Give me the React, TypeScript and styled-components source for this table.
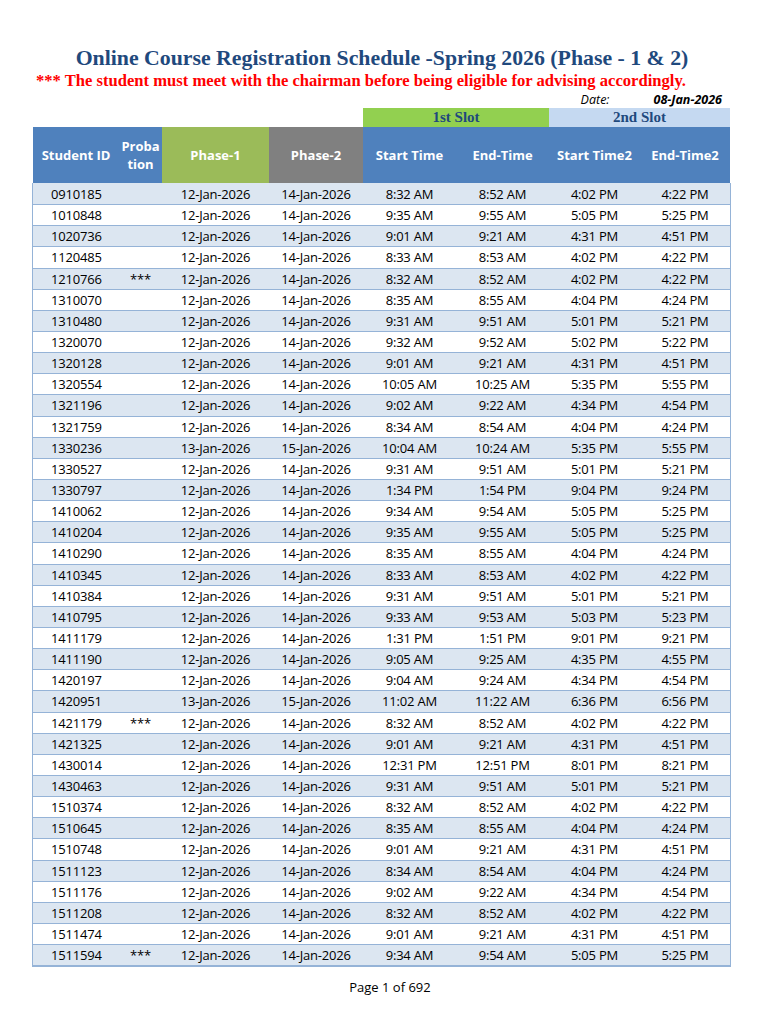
import React from "react";
import styled, { createGlobalStyle } from "styled-components";

const GlobalStyle = createGlobalStyle`
  html, body { margin: 0; padding: 0; background: #ffffff; }
  body { font-family: "Open Sans", "Liberation Sans", sans-serif; }
`;

const COLS = "86px 43px 107px 94px 93px 93px 91px 90px";

const Page = styled.div`
  width: 768px;
  height: 1024px;
  box-sizing: border-box;
  padding: 45px 0 0 0;
  display: flex;
  flex-direction: column;
`;

const Title = styled.h1`
  margin: 0;
  font-family: "Liberation Serif", "DejaVu Serif", serif;
  font-weight: bold;
  font-size: 21.8px;
  line-height: 26px;
  color: #1f497d;
  text-align: center;
  padding-right: 4px;
`;

const Note = styled.div`
  margin: 0 0 0 36px;
  font-family: "Liberation Serif", "DejaVu Serif", serif;
  font-weight: bold;
  font-size: 16.6px;
  line-height: 20px;
  color: #ff0000;
  white-space: nowrap;
`;

const DateLine = styled.div`
  display: flex;
  justify-content: flex-end;
  padding-right: 46px;
  gap: 44px;
  font-family: "Open Sans", sans-serif;
  font-style: italic;
  font-size: 12.5px;
  line-height: 17px;
  color: #000;
`;

const DateValue = styled.span`
  font-weight: bold;
`;

const Table = styled.div`
  margin-left: 33px;
  width: 697px;
  display: flex;
  flex-direction: column;
`;

const SlotRow = styled.div`
  display: grid;
  grid-template-columns: ${COLS};
  height: 19px;
`;

const SlotCell = styled.div<{ $bg: string; $span: number }>`
  grid-column: span ${(p) => p.$span};
  background: ${(p) => p.$bg};
  color: #1f497d;
  font-family: "Liberation Serif", "DejaVu Serif", serif;
  font-weight: bold;
  font-size: 15px;
  display: flex;
  align-items: center;
  justify-content: center;
`;

const HeadRow = styled.div`
  display: grid;
  grid-template-columns: ${COLS};
  height: 56px;
`;

const HeadCell = styled.div<{ $bg: string }>`
  background: ${(p) => p.$bg};
  color: #ffffff;
  font-weight: bold;
  font-size: 13px;
  line-height: 18px;
  display: flex;
  align-items: center;
  justify-content: center;
  text-align: center;
`;

const Body = styled.div`
  border-left: 1px solid #95b3d7;
  border-right: 1px solid #95b3d7;
  border-bottom: 2px solid #95b3d7;
  margin-left: -1px;
  margin-right: -1px;
`;

const Row = styled.div<{ $striped: boolean }>`
  display: grid;
  grid-template-columns: ${COLS};
  height: 21.15px;
  box-sizing: border-box;
  background: ${(p) => (p.$striped ? "#dce6f1" : "#ffffff")};
  border-top: 1px solid #95b3d7;
  font-size: 13px;
  color: #000;
  &:first-child { border-top: none; }
`;

const Cell = styled.div<{ $left?: boolean }>`
  display: flex;
  align-items: center;
  justify-content: ${(p) => (p.$left ? "flex-start" : "center")};
  padding-left: ${(p) => (p.$left ? "18px" : "0")};
  white-space: nowrap;
  letter-spacing: -0.2px;
`;

const Footer = styled.div`
  margin-top: 11px;
  text-align: center;
  padding-left: 12px;
  font-size: 13px;
  color: #000;
`;

type R = [string, string, string, string, string, string, string, string];

const rows: R[] = [
  ["0910185", "", "12-Jan-2026", "14-Jan-2026", "8:32 AM", "8:52 AM", "4:02 PM", "4:22 PM"],
  ["1010848", "", "12-Jan-2026", "14-Jan-2026", "9:35 AM", "9:55 AM", "5:05 PM", "5:25 PM"],
  ["1020736", "", "12-Jan-2026", "14-Jan-2026", "9:01 AM", "9:21 AM", "4:31 PM", "4:51 PM"],
  ["1120485", "", "12-Jan-2026", "14-Jan-2026", "8:33 AM", "8:53 AM", "4:02 PM", "4:22 PM"],
  ["1210766", "***", "12-Jan-2026", "14-Jan-2026", "8:32 AM", "8:52 AM", "4:02 PM", "4:22 PM"],
  ["1310070", "", "12-Jan-2026", "14-Jan-2026", "8:35 AM", "8:55 AM", "4:04 PM", "4:24 PM"],
  ["1310480", "", "12-Jan-2026", "14-Jan-2026", "9:31 AM", "9:51 AM", "5:01 PM", "5:21 PM"],
  ["1320070", "", "12-Jan-2026", "14-Jan-2026", "9:32 AM", "9:52 AM", "5:02 PM", "5:22 PM"],
  ["1320128", "", "12-Jan-2026", "14-Jan-2026", "9:01 AM", "9:21 AM", "4:31 PM", "4:51 PM"],
  ["1320554", "", "12-Jan-2026", "14-Jan-2026", "10:05 AM", "10:25 AM", "5:35 PM", "5:55 PM"],
  ["1321196", "", "12-Jan-2026", "14-Jan-2026", "9:02 AM", "9:22 AM", "4:34 PM", "4:54 PM"],
  ["1321759", "", "12-Jan-2026", "14-Jan-2026", "8:34 AM", "8:54 AM", "4:04 PM", "4:24 PM"],
  ["1330236", "", "13-Jan-2026", "15-Jan-2026", "10:04 AM", "10:24 AM", "5:35 PM", "5:55 PM"],
  ["1330527", "", "12-Jan-2026", "14-Jan-2026", "9:31 AM", "9:51 AM", "5:01 PM", "5:21 PM"],
  ["1330797", "", "12-Jan-2026", "14-Jan-2026", "1:34 PM", "1:54 PM", "9:04 PM", "9:24 PM"],
  ["1410062", "", "12-Jan-2026", "14-Jan-2026", "9:34 AM", "9:54 AM", "5:05 PM", "5:25 PM"],
  ["1410204", "", "12-Jan-2026", "14-Jan-2026", "9:35 AM", "9:55 AM", "5:05 PM", "5:25 PM"],
  ["1410290", "", "12-Jan-2026", "14-Jan-2026", "8:35 AM", "8:55 AM", "4:04 PM", "4:24 PM"],
  ["1410345", "", "12-Jan-2026", "14-Jan-2026", "8:33 AM", "8:53 AM", "4:02 PM", "4:22 PM"],
  ["1410384", "", "12-Jan-2026", "14-Jan-2026", "9:31 AM", "9:51 AM", "5:01 PM", "5:21 PM"],
  ["1410795", "", "12-Jan-2026", "14-Jan-2026", "9:33 AM", "9:53 AM", "5:03 PM", "5:23 PM"],
  ["1411179", "", "12-Jan-2026", "14-Jan-2026", "1:31 PM", "1:51 PM", "9:01 PM", "9:21 PM"],
  ["1411190", "", "12-Jan-2026", "14-Jan-2026", "9:05 AM", "9:25 AM", "4:35 PM", "4:55 PM"],
  ["1420197", "", "12-Jan-2026", "14-Jan-2026", "9:04 AM", "9:24 AM", "4:34 PM", "4:54 PM"],
  ["1420951", "", "13-Jan-2026", "15-Jan-2026", "11:02 AM", "11:22 AM", "6:36 PM", "6:56 PM"],
  ["1421179", "***", "12-Jan-2026", "14-Jan-2026", "8:32 AM", "8:52 AM", "4:02 PM", "4:22 PM"],
  ["1421325", "", "12-Jan-2026", "14-Jan-2026", "9:01 AM", "9:21 AM", "4:31 PM", "4:51 PM"],
  ["1430014", "", "12-Jan-2026", "14-Jan-2026", "12:31 PM", "12:51 PM", "8:01 PM", "8:21 PM"],
  ["1430463", "", "12-Jan-2026", "14-Jan-2026", "9:31 AM", "9:51 AM", "5:01 PM", "5:21 PM"],
  ["1510374", "", "12-Jan-2026", "14-Jan-2026", "8:32 AM", "8:52 AM", "4:02 PM", "4:22 PM"],
  ["1510645", "", "12-Jan-2026", "14-Jan-2026", "8:35 AM", "8:55 AM", "4:04 PM", "4:24 PM"],
  ["1510748", "", "12-Jan-2026", "14-Jan-2026", "9:01 AM", "9:21 AM", "4:31 PM", "4:51 PM"],
  ["1511123", "", "12-Jan-2026", "14-Jan-2026", "8:34 AM", "8:54 AM", "4:04 PM", "4:24 PM"],
  ["1511176", "", "12-Jan-2026", "14-Jan-2026", "9:02 AM", "9:22 AM", "4:34 PM", "4:54 PM"],
  ["1511208", "", "12-Jan-2026", "14-Jan-2026", "8:32 AM", "8:52 AM", "4:02 PM", "4:22 PM"],
  ["1511474", "", "12-Jan-2026", "14-Jan-2026", "9:01 AM", "9:21 AM", "4:31 PM", "4:51 PM"],
  ["1511594", "***", "12-Jan-2026", "14-Jan-2026", "9:34 AM", "9:54 AM", "5:05 PM", "5:25 PM"],
];

const BLUE = "#4f81bd";

export default function App() {
  return (
    <>
      <GlobalStyle />
      <Page>
        <Title>Online Course Registration Schedule -Spring 2026 (Phase - 1 &amp; 2)</Title>
        <Note>*** The student must meet with the chairman before being eligible for advising accordingly.</Note>
        <DateLine>
          <span>Date:</span>
          <DateValue>08-Jan-2026</DateValue>
        </DateLine>
        <Table>
          <SlotRow>
            <SlotCell $bg="transparent" $span={4} />
            <SlotCell $bg="#92d050" $span={2}>1st Slot</SlotCell>
            <SlotCell $bg="#c5d9f1" $span={2}>2nd Slot</SlotCell>
          </SlotRow>
          <HeadRow>
            <HeadCell $bg={BLUE}>Student ID</HeadCell>
            <HeadCell $bg={BLUE}>Proba<br />tion</HeadCell>
            <HeadCell $bg="#9bbb59">Phase-1</HeadCell>
            <HeadCell $bg="#808080">Phase-2</HeadCell>
            <HeadCell $bg={BLUE}>Start Time</HeadCell>
            <HeadCell $bg={BLUE}>End-Time</HeadCell>
            <HeadCell $bg={BLUE}>Start Time2</HeadCell>
            <HeadCell $bg={BLUE}>End-Time2</HeadCell>
          </HeadRow>
          <Body>
            {rows.map((r, i) => (
              <Row key={r[0] + i} $striped={i % 2 === 0}>
                <Cell $left>{r[0]}</Cell>
                <Cell>{r[1]}</Cell>
                <Cell>{r[2]}</Cell>
                <Cell>{r[3]}</Cell>
                <Cell>{r[4]}</Cell>
                <Cell>{r[5]}</Cell>
                <Cell>{r[6]}</Cell>
                <Cell>{r[7]}</Cell>
              </Row>
            ))}
          </Body>
        </Table>
        <Footer>Page 1 of 692</Footer>
      </Page>
    </>
  );
}
